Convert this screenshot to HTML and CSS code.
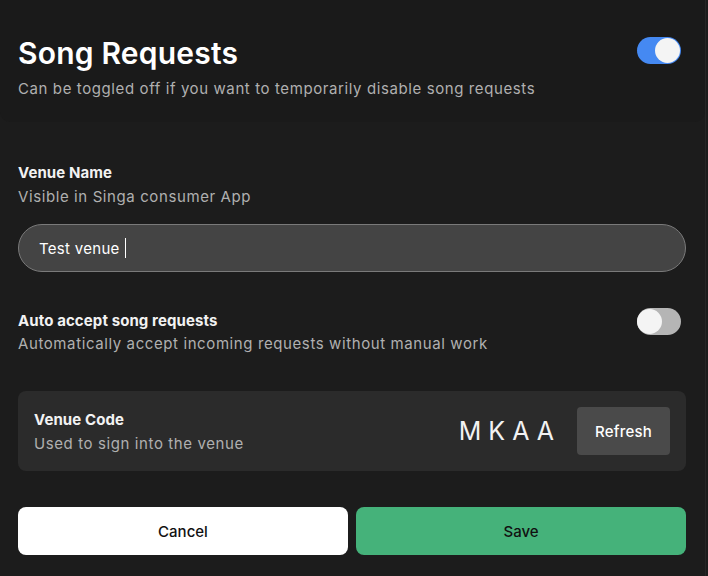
FILE: index.html
```html
<!DOCTYPE html>
<html>
<head>
<meta charset="utf-8">
<link rel="stylesheet" href="styles.css">
</head>
<body>
<div class="page">
  <header class="head">
    <div class="row">
      <div class="texts">
        <h1 class="title">Song Requests</h1>
        <p class="sub">Can be toggled off if you want to temporarily disable song requests</p>
      </div>
      <div class="toggle on"><span class="knob"></span></div>
    </div>
  </header>
  <main class="body">
    <section class="field">
      <div class="label">Venue Name</div>
      <p class="sub">Visible in Singa consumer App</p>
      <div class="input"><span class="val">Test venue</span><span class="caret"></span></div>
    </section>
    <section class="row auto">
      <div class="texts">
        <div class="label">Auto accept song requests</div>
        <p class="sub">Automatically accept incoming requests without manual work</p>
      </div>
      <div class="toggle off"><span class="knob"></span></div>
    </section>
    <section class="code-card">
      <div class="texts">
        <div class="label">Venue Code</div>
        <p class="sub">Used to sign into the venue</p>
      </div>
      <div class="code-right">
        <span class="code">MKAA</span>
        <button class="refresh">Refresh</button>
      </div>
    </section>
    <div class="actions">
      <button class="btn cancel">Cancel</button>
      <button class="btn save">Save</button>
    </div>
  </main>
</div>
</body>
</html>
```
FILE: styles.css
```css
* { box-sizing: border-box; }
html, body { margin: 0; padding: 0; }
body {
  background: #1c1c1c;
  font-family: Inter, "Noto Sans", sans-serif;
  color: #fff;
  width: 708px;
  height: 576px;
  overflow: hidden;
}
.page {
  width: 706px;
  height: 576px;
  border-right: 1px solid #262626;
}
.head {
  background: #1a1a1a;
  border-radius: 0 0 10px 10px;
  height: 122px;
  padding: 35px 24px 0 18px;
}
.row {
  display: flex;
  justify-content: space-between;
  align-items: flex-start;
}
.title {
  margin: 0;
  font-size: 30px;
  font-weight: 600;
  line-height: 36px;
  letter-spacing: 0.2px;
}
.sub {
  margin: 0;
  font-size: 15px;
  line-height: 22px;
  color: #b0b0b0;
  letter-spacing: 0.6px;
}
.head .sub { margin-top: 7px; }
.toggle {
  width: 44px;
  height: 27px;
  border-radius: 14px;
  position: relative;
  flex: none;
  margin-top: 2px;
}
.toggle.on { background: #4589f2; }
.toggle.off { background: #b5b5b5; }
.knob {
  position: absolute;
  top: 1px;
  width: 25px;
  height: 25px;
  border-radius: 50%;
  background: #f4f4f4;
}
.on .knob { right: 1px; }
.off .knob { left: 0; }
.body {
  padding: 40px 19px 0 18px;
}
.label {
  font-size: 15px;
  font-weight: 700;
  line-height: 22px;
  color: #f2f2f2;
  letter-spacing: 0.1px;
}
.field .sub { margin-top: 2px; }
.input {
  margin-top: 16px;
  height: 48px;
  border-radius: 24px;
  background: #444;
  border: 1px solid #7a7a7a;
  display: flex;
  align-items: center;
  padding-left: 20px;
  font-size: 15px;
  letter-spacing: 0.3px;
  color: #fff;
}
.caret {
  display: inline-block;
  width: 1px;
  height: 20px;
  background: #fff;
  margin-left: 5px;
}
.auto {
  margin-top: 38px;
  padding-right: 5px;
}
.auto .toggle { margin-top: -2px; }
.auto .sub { margin-top: 1px; }
.code-card {
  margin-top: 36px;
  height: 80px;
  background: #2b2b2b;
  border-radius: 8px;
  display: flex;
  align-items: center;
  justify-content: space-between;
  padding: 2px 16px 0;
}
.code-card .sub { margin-top: 2px; }
.code-right {
  display: flex;
  align-items: center;
  margin-top: -2px;
}
.code {
  font-size: 25px;
  font-weight: 400;
  letter-spacing: 7px;
  color: #f2f2f2;
  margin-right: 16px;
}
.refresh {
  width: 93px;
  height: 48px;
  background: #4a4a4a;
  border: none;
  border-radius: 4px;
  color: #fff;
  font-family: inherit;
  font-size: 15px;
  font-weight: 500;
  letter-spacing: 0.2px;
}
.actions {
  margin-top: 36px;
  display: flex;
  gap: 8px;
}
.btn {
  flex: 1;
  height: 48px;
  border: none;
  border-radius: 8px;
  font-family: inherit;
  font-size: 15px;
  font-weight: 500;
  color: #111;
}
.cancel { background: #fff; }
.save { background: #45b27a; }
```
